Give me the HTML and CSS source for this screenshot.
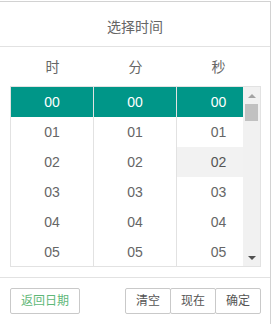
FILE: index.html
```html
<!DOCTYPE html>
<html lang="zh">
<head>
<meta charset="utf-8">
<title>选择时间</title>
<link rel="stylesheet" href="styles.css">
</head>
<body>
<div class="panel">
  <div class="header">选择时间</div>
  <div class="content">
    <div class="labels">
      <div class="label">时</div>
      <div class="label">分</div>
      <div class="label label-last">秒</div>
    </div>
    <div class="list">
      <ol class="col">
        <li class="selected">00</li><li>01</li><li>02</li><li>03</li><li>04</li><li>05</li>
      </ol>
      <ol class="col">
        <li class="selected">00</li><li>01</li><li>02</li><li>03</li><li>04</li><li>05</li>
      </ol>
      <ol class="col col-last">
        <li class="selected">00</li><li>01</li><li class="hover">02</li><li>03</li><li>04</li><li>05</li>
      </ol>
      <div class="scrollbar">
        <div class="sb-btn"><span class="arrow-up"></span></div>
        <div class="sb-track"><div class="sb-thumb"></div></div>
        <div class="sb-btn"><span class="arrow-down"></span></div>
      </div>
    </div>
  </div>
  <div class="footer">
    <span class="btn btn-time">返回日期</span>
    <div class="btns">
      <span class="btn">清空</span><span class="btn">现在</span><span class="btn">确定</span>
    </div>
  </div>
</div>
</body>
</html>
```
FILE: styles.css
```css
html, body {
  margin: 0;
  padding: 0;
  background: #fff;
}
body {
  font-family: "Liberation Sans", "Noto Sans CJK SC", sans-serif;
  color: #666;
  overflow: hidden;
}
.panel {
  box-sizing: border-box;
  width: 272px;
  margin: 1px 0 0 -1px;
  border: 1px solid #d2d2d2;
  background: #fff;
}
.header {
  padding: 10px 0 5px;
  line-height: 30px;
  height: 29px;
  font-size: 14px;
  text-align: center;
  color: #666;
  border-bottom: 1px solid #e2e2e2;
}
.content {
  padding: 0 9px 10px 10px;
}
.labels {
  display: flex;
  padding: 5px 0 4px 1px;
  height: 30px;
  line-height: 30px;
  font-size: 14px;
  color: #666;
}
.label {
  width: 83px;
  text-align: center;
}
.label-last {
  width: 83px;
}
.list {
  position: relative;
  display: flex;
  height: 179px;
  border: 1px solid #e2e2e2;
  overflow: hidden;
}
.col {
  list-style: none;
  margin: 0;
  padding: 0;
  width: 82px;
  border-right: 1px solid #e2e2e2;
}
.col-last {
  width: 83px;
  border-right: none;
}
.col li {
  height: 30px;
  line-height: 30px;
  font-size: 14px;
  text-align: center;
  color: #666;
}
.col li.selected {
  background: #009688;
  color: #fff;
}
.col li.hover {
  background: #f2f2f2;
  color: #555;
}
.scrollbar {
  position: absolute;
  top: 0;
  right: 0;
  width: 17px;
  height: 179px;
  background: #f1f1f1;
  display: flex;
  flex-direction: column;
}
.sb-btn {
  height: 17px;
  display: flex;
  align-items: center;
  justify-content: center;
}
.sb-track {
  flex: 1;
  position: relative;
}
.sb-thumb {
  margin: 0 2px;
  height: 17px;
  background: #c1c1c1;
}
.arrow-up {
  width: 0;
  height: 0;
  border-left: 4px solid transparent;
  border-right: 4px solid transparent;
  border-bottom: 4px solid #a3a3a3;
}
.arrow-down {
  width: 0;
  height: 0;
  border-left: 4px solid transparent;
  border-right: 4px solid transparent;
  border-top: 4px solid #505050;
}
.footer {
  display: flex;
  justify-content: space-between;
  padding: 10px 9px 10px 10px;
  border-top: 1px solid #e2e2e2;
}
.btns {
  display: flex;
}
.btn {
  display: inline-block;
  height: 24px;
  line-height: 24px;
  padding: 0 10px;
  border: 1px solid #c9c9c9;
  border-radius: 2px;
  font-size: 12px;
  color: #555;
  background: #fff;
  white-space: nowrap;
}
.btns .btn + .btn {
  margin-left: -1px;
}
.btn-time {
  color: #5fb878;
}
```
